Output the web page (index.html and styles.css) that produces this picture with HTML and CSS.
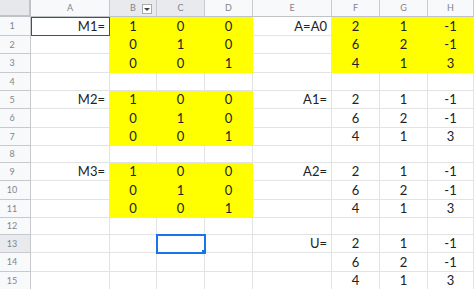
FILE: index.html
```html
<!DOCTYPE html>
<html lang="en">
<head>
    <meta charset="UTF-8">
    <meta name="viewport" content="width=device-width, initial-scale=1.0">
    <!-- estilo -->
    <link rel="stylesheet" href="styles.css">
    <title>Planilha</title>
</head>
<body>
    <!-- planilha -->
    <table class="sheet">
        <colgroup>
            <col class="w-head">
            <col class="w-wide">
            <col class="w-b">
            <col class="w-num">
            <col class="w-num">
            <col class="w-wide">
            <col class="w-num">
            <col class="w-num">
            <col class="w-last">
        </colgroup>
        <tr class="hdr">
            <th class="corner"></th>
            <th>A</th>
            <th class="sel">B<span class="filter"></span></th>
            <th class="sel">C</th>
            <th>D</th>
            <th>E</th>
            <th>F</th>
            <th>G</th>
            <th>H</th>
        </tr>
        <tr class="tall">
            <th>1</th>
            <td class="label picked">M1=</td>
            <td class="y">1</td><td class="y">0</td><td class="y">0</td>
            <td class="label">A=A0</td>
            <td class="y">2</td><td class="y">1</td><td class="y">-1</td>
        </tr>
        <tr>
            <th>2</th>
            <td></td>
            <td class="y">0</td><td class="y">1</td><td class="y">0</td>
            <td></td>
            <td class="y">6</td><td class="y">2</td><td class="y">-1</td>
        </tr>
        <tr class="tall">
            <th>3</th>
            <td></td>
            <td class="y">0</td><td class="y">0</td><td class="y">1</td>
            <td></td>
            <td class="y">4</td><td class="y">1</td><td class="y">3</td>
        </tr>
        <tr>
            <th>4</th>
            <td></td><td></td><td></td><td></td><td></td><td></td><td></td><td></td>
        </tr>
        <tr>
            <th>5</th>
            <td class="label">M2=</td>
            <td class="y">1</td><td class="y">0</td><td class="y">0</td>
            <td class="label">A1=</td>
            <td>2</td><td>1</td><td>-1</td>
        </tr>
        <tr class="tall">
            <th>6</th>
            <td></td>
            <td class="y">0</td><td class="y">1</td><td class="y">0</td>
            <td></td>
            <td>6</td><td>2</td><td>-1</td>
        </tr>
        <tr>
            <th>7</th>
            <td></td>
            <td class="y">0</td><td class="y">0</td><td class="y">1</td>
            <td></td>
            <td>4</td><td>1</td><td>3</td>
        </tr>
        <tr class="short">
            <th>8</th>
            <td></td><td></td><td></td><td></td><td></td><td></td><td></td><td></td>
        </tr>
        <tr>
            <th>9</th>
            <td class="label">M3=</td>
            <td class="y">1</td><td class="y">0</td><td class="y">0</td>
            <td class="label">A2=</td>
            <td>2</td><td>1</td><td>-1</td>
        </tr>
        <tr class="tall">
            <th>10</th>
            <td></td>
            <td class="y">0</td><td class="y">1</td><td class="y">0</td>
            <td></td>
            <td>6</td><td>2</td><td>-1</td>
        </tr>
        <tr>
            <th>11</th>
            <td></td>
            <td class="y">0</td><td class="y">0</td><td class="y">1</td>
            <td></td>
            <td>4</td><td>1</td><td>3</td>
        </tr>
        <tr class="short">
            <th>12</th>
            <td></td><td></td><td></td><td></td><td></td><td></td><td></td><td></td>
        </tr>
        <tr>
            <th class="sel">13</th>
            <td></td><td></td>
            <td class="active"></td>
            <td></td>
            <td class="label">U=</td>
            <td>2</td><td>1</td><td>-1</td>
        </tr>
        <tr class="tall">
            <th>14</th>
            <td></td><td></td><td></td><td></td><td></td>
            <td>6</td><td>2</td><td>-1</td>
        </tr>
        <tr>
            <th>15</th>
            <td></td><td></td><td></td><td></td><td></td>
            <td>4</td><td>1</td><td>3</td>
        </tr>
    </table>
</body>
</html>
```

FILE: styles.css
```css
:root {
    --grid: #e2e3e3;
    --head-bg: #f8f9fa;
    --head-sel: #e8eaed;
    --head-line: #c7c9cc;
    --head-text: #80868b;
    --fill: #ffff00;
    --text: #222;
    --blue: #1a73e8;
    --green: #1e6a44;
}
body {
    margin: 0;
    overflow: hidden;
    background-color: #fff;
    font-family: Lato, "Liberation Sans", sans-serif;
}
.sheet {
    table-layout: fixed;
    width: 474px;
    border-collapse: separate;
    border-spacing: 0;
}
.w-head { width: 31px; }
.w-wide { width: 79px; }
.w-b { width: 47px; }
.w-num { width: 48px; }
.w-last { width: 46px; }

tr { height: 18px; }
tr.tall { height: 19px; }
tr.short { height: 17px; }
tr.hdr { height: 17px; }

th, td {
    box-sizing: border-box;
    padding: 0;
    border-right: 1px solid var(--grid);
    border-bottom: 1px solid var(--grid);
    overflow: hidden;
    white-space: nowrap;
}
th {
    background-color: var(--head-bg);
    border-color: var(--head-line);
    color: var(--head-text);
    font-size: 9px;
    font-weight: normal;
    text-align: center;
    vertical-align: middle;
    line-height: 10px;
}
tr th:first-child {
    padding-right: 6px;
}
.hdr th {
    border-bottom-color: #bfc2c6;
}
th.sel {
    background-color: var(--head-sel);
}
th.corner {
    background-color: #e6e8eb;
    border-right: 2px solid #bfc2c6;
    border-bottom: 2px solid #bfc2c6;
}
.hdr th:nth-child(3) {
    position: relative;
}
.filter {
    position: absolute;
    right: 4px;
    top: 4px;
    width: 8px;
    height: 8px;
    border: 1px solid #a8abaf;
    background-color: #fff;
}
.filter::after {
    content: "";
    position: absolute;
    left: 1px;
    top: 3px;
    border-left: 3px solid transparent;
    border-right: 3px solid transparent;
    border-top: 3px solid #444;
}
td {
    color: var(--text);
    font-size: 13px;
    text-align: center;
    vertical-align: bottom;
    line-height: 14px;
    padding-bottom: 2px;
}
td.label {
    text-align: right;
    padding-right: 4px;
}
td.y {
    background-color: var(--fill);
    border-color: var(--fill);
}
td.picked {
    outline: 1px solid var(--green);
    outline-offset: -1px;
}
td.active {
    position: relative;
    outline: 2px solid var(--blue);
    outline-offset: -1px;
}
td.active::after {
    content: "";
    position: absolute;
    right: -4px;
    bottom: -4px;
    width: 5px;
    height: 5px;
    background-color: var(--blue);
    border: 1px solid #fff;
}
```
